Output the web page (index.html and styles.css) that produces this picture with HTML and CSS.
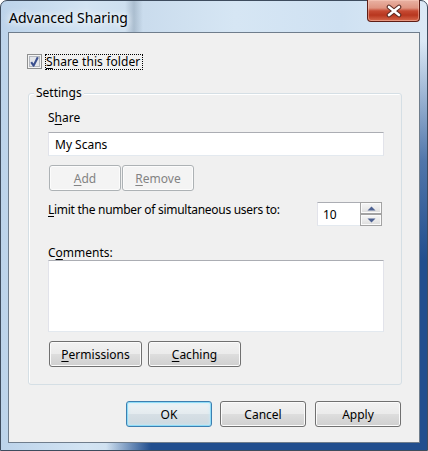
FILE: index.html
```html
<!DOCTYPE html>
<html>
<head>
<meta charset="utf-8">
<title>Advanced Sharing</title>
<link rel="stylesheet" href="styles.css">
</head>
<body>
<div class="window">
  <div class="titlebar">
    <div class="title">Advanced Sharing</div>
    <div class="close">
      <svg width="16" height="14" viewBox="0 0 16 14">
        <path d="M3 3 L13 11 M13 3 L3 11" stroke="#5b2a22" stroke-width="4.6" stroke-linecap="round" fill="none"/>
        <path d="M3 3 L13 11 M13 3 L3 11" stroke="#ffffff" stroke-width="2.6" stroke-linecap="round" fill="none"/>
      </svg>
    </div>
  </div>
  <div class="client">
    <div class="check-row">
      <span class="checkbox">
        <svg width="15" height="15" viewBox="0 0 15 15">
          <rect x="0.5" y="0.5" width="14" height="14" fill="#f4f4f4" stroke="#8e8f8f"/>
          <rect x="2.5" y="2.5" width="10" height="10" fill="#e4e6ea" stroke="#b4b8bf"/>
          <path d="M4.2 8.2 L6.6 11.6 L10.8 3.2" stroke="#3a4f8e" stroke-width="2.1" fill="none" stroke-linejoin="round"/>
        </svg>
      </span>
      <span class="check-label"><u>S</u>hare this folder</span>
    </div>
    <div class="group">
      <div class="legend">Settings</div>
      <div class="field-label">S<u>h</u>are</div>
      <div class="textbox">My Scans</div>
      <div class="btn-row tight">
        <div class="btn disabled"><u>A</u>dd</div>
        <div class="btn disabled"><u>R</u>emove</div>
      </div>
      <div class="limit-row">
        <div class="limit-label"><u>L</u>imit the number of simultaneous users to:</div>
        <div class="spin">
          <div class="spin-edit">10</div>
          <div class="spin-btns">
            <div class="spin-btn">
              <svg width="9" height="5" viewBox="0 0 9 5"><path d="M0.5 4.5 L4.5 0.5 L8.5 4.5 Z" fill="#4d6191"/></svg>
            </div>
            <div class="spin-btn">
              <svg width="9" height="5" viewBox="0 0 9 5"><path d="M0.5 0.5 L4.5 4.5 L8.5 0.5 Z" fill="#4d6191"/></svg>
            </div>
          </div>
        </div>
      </div>
      <div class="field-label comments">C<u>o</u>mments:</div>
      <div class="textarea"></div>
      <div class="btn-row wide">
        <div class="btn"><u>P</u>ermissions</div>
        <div class="btn"><u>C</u>aching</div>
      </div>
    </div>
    <div class="dialog-buttons">
      <div class="btn default">OK</div>
      <div class="btn">Cancel</div>
      <div class="btn">Apply</div>
    </div>
  </div>
</div>
</body>
</html>
```

FILE: styles.css
```css
* { box-sizing: border-box; }
html, body { margin: 0; padding: 0; background: #ffffff; }
body {
  font-family: "Noto Sans", "Open Sans", sans-serif;
  font-size: 12px;
  line-height: 15px;
  color: #000;
}
u { text-decoration: underline; text-underline-offset: 2px; text-decoration-thickness: 1px; }

.window {
  width: 428px;
  height: 451px;
  border: 1px solid #3e4c5e;
  border-radius: 7px 7px 0 0;
  padding: 0 7px 7px 7px;
  display: flex;
  flex-direction: column;
  background:
    linear-gradient(to bottom, rgba(35,80,145,0) 0px, rgba(35,80,145,0) 40px, rgba(35,80,145,0.75) 160px, rgba(33,78,142,1) 260px, rgba(33,78,142,1) 100%) right top / 7px 100% no-repeat,
    linear-gradient(to right, rgba(33,78,142,0) 0px, rgba(33,78,142,0) 105px, rgba(33,78,142,1) 150px, rgba(33,78,142,1) 100%) left bottom / 100% 7px no-repeat,
    linear-gradient(to right, rgba(110,130,150,0) 124px, rgba(110,130,150,0.35) 133px, rgba(110,130,150,0) 142px) left top / 100% 32px no-repeat,
    linear-gradient(to right, #bcd3ea 0%, #d3e4f3 20%, #cadced 34%, #d6e6f4 55%, #cfe1f2 80%, #dce9f6 100%);
}

.titlebar {
  height: 31px;
  display: flex;
  align-items: flex-start;
}
.title {
  margin: 8px 0 0 1px;
  font-size: 14px;
  line-height: 17px;
  color: #000;
  text-shadow: 0 0 6px #fff, 0 0 10px #fff;
}
.close {
  margin: -1px 0 0 auto;
  width: 53px;
  height: 22px;
  border: 1px solid #5e1d15;
  border-top: none;
  border-radius: 0 0 4px 4px;
  background: linear-gradient(to bottom, #e9b2a3 0%, #df9481 38%, #c64a33 52%, #b8371f 72%, #d6694d 100%);
  box-shadow: inset 0 0 0 1px rgba(255, 210, 195, 0.45);
  display: flex;
  align-items: center;
  justify-content: center;
}

.client {
  flex: 1;
  background: #f0f0f0;
  border: 1px solid #6f7d8c;
  display: flex;
  flex-direction: column;
}

.check-row {
  margin: 21px 0 0 18px;
  height: 16px;
  display: flex;
  align-items: flex-start;
}
.checkbox { width: 15px; height: 15px; display: block; }
.checkbox svg { display: block; }
.check-label {
  margin-left: 3px;
  border: 1px dotted #000;
  line-height: 14px;
  padding: 0 2px 0 0;
  letter-spacing: 0.1px;
}

.group {
  margin: 23px 17px 0 19px;
  border: 1px solid #d5dfe5;
  border-radius: 3px;
  box-shadow: inset 1px 1px 0 #fff;
  padding: 0 17px 17px 19px;
  display: flex;
  flex-direction: column;
}
.legend {
  margin: -9px 0 0 -14px;
  padding: 0 2px;
  background: #f0f0f0;
  align-self: flex-start;
}
.field-label { margin-top: 10px; }
.field-label.comments { margin-top: 19px; }

.limit-label { letter-spacing: -0.28px; }

.textbox {
  margin-top: 7px;
  height: 24px;
  border: 1px solid #e2e3ea;
  border-top-color: #abadb3;
  border-bottom-color: #e3e9ef;
  background: #fff;
  padding-left: 6px;
  display: flex;
  align-items: center;
}

.btn {
  height: 26px;
  border: 1px solid #707070;
  border-radius: 3px;
  background: linear-gradient(to bottom, #f2f2f2 0%, #ebebeb 48%, #dddddd 52%, #cfcfcf 100%);
  box-shadow: inset 0 0 0 1px #fbfbfb;
  display: flex;
  align-items: center;
  justify-content: center;
  color: #000;
}
.btn.disabled {
  border-color: #adb2b5;
  background: #f4f4f4;
  box-shadow: inset 0 0 0 1px #fcfcfc;
  color: #838383;
}
.btn.default {
  border-color: #3c7fb1;
  background: linear-gradient(to bottom, #eef3f6 0%, #e4ebef 48%, #d6dfe5 52%, #cdd8df 100%);
  box-shadow: inset 0 0 0 1px #8fdcf7, inset 0 0 3px 1px #c6eefb;
}

.btn-row { display: flex; margin-top: 9px; margin-left: 1px; }
.btn-row.tight .btn { width: 72px; }
.btn-row.tight .btn + .btn { margin-left: 1px; }
.btn-row.wide .btn { width: 93px; }
.btn-row.wide .btn + .btn { margin-left: 6px; }

.limit-row {
  margin-top: 11px;
  display: flex;
  align-items: flex-start;
}
.spin {
  margin-left: auto;
  margin-right: 2px;
  width: 65px;
  height: 24px;
  display: flex;
}
.spin-edit {
  flex: 1;
  border: 1px solid #e2e3ea;
  border-top-color: #abadb3;
  border-bottom-color: #e3e9ef;
  border-right: none;
  background: #fff;
  padding-left: 5px;
  display: flex;
  align-items: center;
}
.spin-btns {
  width: 22px;
  display: flex;
  flex-direction: column;
}
.spin-btn {
  flex: 1;
  border: 1px solid #a3a3a3;
  background: linear-gradient(to bottom, #f6f6f6 0%, #ebebeb 50%, #dcdcdc 100%);
  box-shadow: inset 0 0 0 1px #fbfbfb;
  display: flex;
  align-items: center;
  justify-content: center;
}
.spin-btn svg { display: block; }

.textarea {
  height: 72px;
  border: 1px solid #e2e3ea;
  border-top-color: #abadb3;
  border-bottom-color: #e3e9ef;
  background: #fff;
}

.dialog-buttons {
  margin: 16px 18px 0 0;
  display: flex;
  justify-content: flex-end;
}
.dialog-buttons .btn { width: 86px; }
.dialog-buttons .btn + .btn { margin-left: 8px; }
.dialog-buttons .btn:last-child { margin-left: 9px; }
```
